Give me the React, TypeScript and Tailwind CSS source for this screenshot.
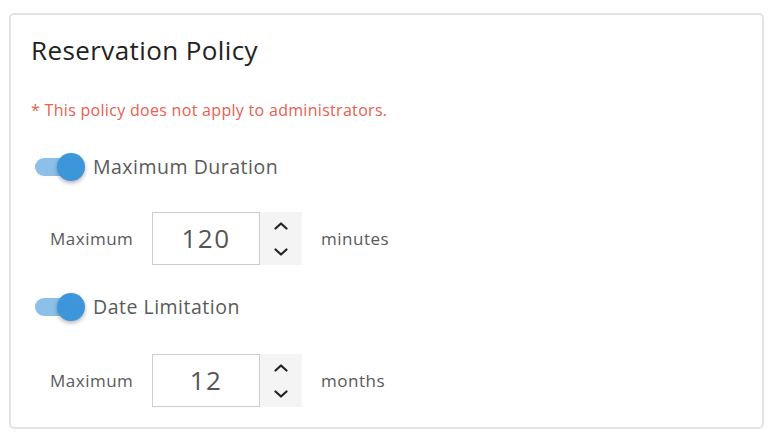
import { useState } from 'react';

interface ToggleRowProps {
  label: string;
  on: boolean;
  onChange: (v: boolean) => void;
}

function ToggleRow({ label, on, onChange }: ToggleRowProps) {
  return (
    <div className="flex items-center h-[28px]">
      <button
        type="button"
        onClick={() => onChange(!on)}
        className="relative w-[52px] h-[28px] ml-[4px] flex items-center"
      >
        <span
          className={`absolute left-0 w-[46px] h-[18px] rounded-full ${on ? 'bg-[#8cc0e8]' : 'bg-[#cfcfcf]'}`}
        />
        <span
          className={`absolute top-0 w-[28px] h-[28px] rounded-full shadow-[0_2px_4px_rgba(0,0,0,0.3)] ${on ? 'left-[22px] bg-[#3d96da]' : 'left-0 bg-[#f5f5f5]'}`}
        />
      </button>
      <span className="ml-[6px] text-[19.5px] leading-[28px] tracking-[0.5px] text-[#5a5a5a]">{label}</span>
    </div>
  );
}

interface NumberRowProps {
  value: number;
  unit: string;
  onChange: (v: number) => void;
}

function NumberRow({ value, unit, onChange }: NumberRowProps) {
  return (
    <div className="flex items-center pl-[19px]">
      <span className="w-[102px] text-[17px] tracking-[0.5px] text-[#5a5a5a]">Maximum</span>
      <div className="w-[108px] h-[53px] border border-[#cdcdcd] flex items-center justify-center text-[26px] tracking-[1.5px] text-[#555]">
        {value}
      </div>
      <div className="w-[42px] h-[53px] bg-[#f4f4f4] flex flex-col items-center justify-center gap-[18px]">
        <button type="button" className="flex" onClick={() => onChange(value + 1)}>
          <svg width="14" height="8" viewBox="0 0 14 8" fill="none" stroke="#222" strokeWidth="2.2" strokeLinecap="round" strokeLinejoin="round">
            <path d="M1.5 6.5L7 1.5L12.5 6.5" />
          </svg>
        </button>
        <button type="button" className="flex" onClick={() => onChange(Math.max(0, value - 1))}>
          <svg width="14" height="8" viewBox="0 0 14 8" fill="none" stroke="#222" strokeWidth="2.2" strokeLinecap="round" strokeLinejoin="round">
            <path d="M1.5 1.5L7 6.5L12.5 1.5" />
          </svg>
        </button>
      </div>
      <span className="ml-[19px] text-[17px] tracking-[0.5px] text-[#5a5a5a]">{unit}</span>
    </div>
  );
}

export default function App() {
  const [durationOn, setDurationOn] = useState(true);
  const [dateOn, setDateOn] = useState(true);
  const [minutes, setMinutes] = useState(120);
  const [months, setMonths] = useState(12);

  return (
    <div className="w-[774px] h-[438px] bg-white pt-[13px] pl-[9px]" style={{ fontFamily: '"Open Sans", "Noto Sans", sans-serif' }}>
      <div className="w-[755px] h-[416px] border-2 border-[#e3e3e3] rounded-[5px] pl-[20px] pt-[19px]">
        <h1 className="text-[26px] leading-[32px] tracking-[0.4px] text-[#222]">Reservation Policy</h1>

        <p className="mt-[34px] text-[16px] leading-[20px] tracking-[0.3px] text-[#e8604f]">
          * This policy does not apply to administrators.
        </p>

        <div className="mt-[33px]">
          <ToggleRow label="Maximum Duration" on={durationOn} onChange={setDurationOn} />
        </div>
        <div className="mt-[31px]">
          <NumberRow value={minutes} unit="minutes" onChange={setMinutes} />
        </div>

        <div className="mt-[28px]">
          <ToggleRow label="Date Limitation" on={dateOn} onChange={setDateOn} />
        </div>
        <div className="mt-[33px]">
          <NumberRow value={months} unit="months" onChange={setMonths} />
        </div>
      </div>
    </div>
  );
}
